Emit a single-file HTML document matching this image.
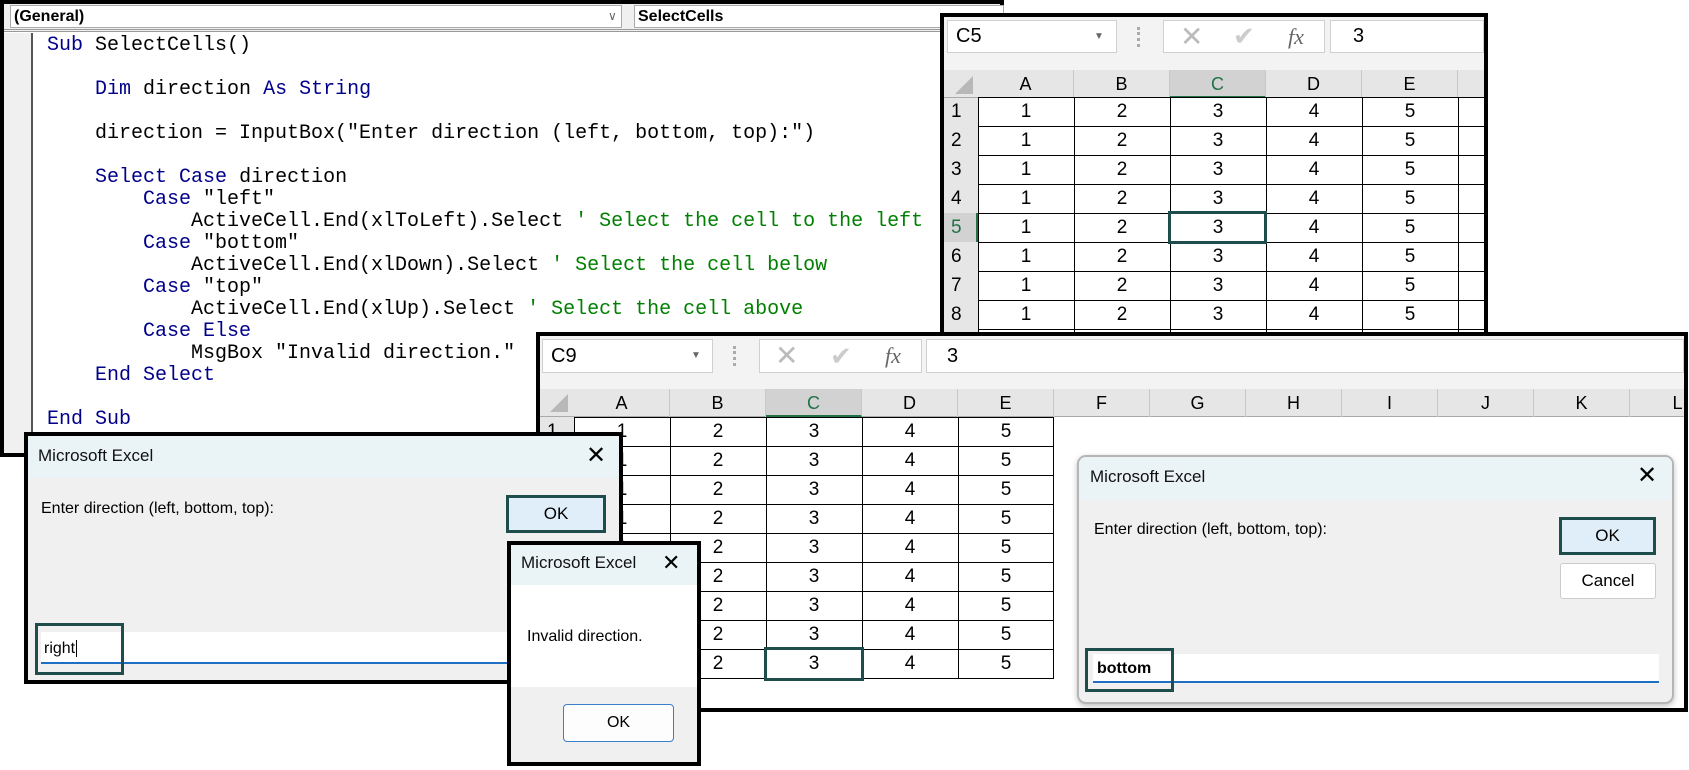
<!DOCTYPE html>
<html><head><meta charset="utf-8"><style>
*{margin:0;padding:0;box-sizing:border-box}
body{width:1689px;height:770px;background:#fff;position:relative;overflow:hidden;font-family:"Liberation Sans",sans-serif}
.a{position:absolute}
.code{font-family:"Liberation Mono",monospace;font-size:20px;line-height:22px;white-space:pre;color:#000}
.k{color:#00008b}.c{color:#008000}
.row{position:absolute;display:flex;font-size:19px;height:29px;line-height:29px}
.row span{width:96px;text-align:center;display:block}
.hd{position:absolute;display:flex;font-size:18px;line-height:28px;color:#000}
.hd span{width:96px;text-align:center;border-right:1px solid #c8c8c8;display:block;height:28px}
.fb{background:#fff;border:1px solid #d0d0d0}
.ttl{font-size:17px;color:#111}
</style></head><body>

<!-- VBA window -->
<div class="a" style="left:0;top:0;width:1004px;height:457px;border:4px solid #000;background:#fff"></div>
<div class="a" style="left:4px;top:4px;width:996px;height:28px;background:#f0f0f0;border-bottom:3px double #999"></div>
<div class="a" style="left:10px;top:5px;width:612px;height:23px;background:#fff;border:1px solid #aaa;font-weight:bold;font-size:16px;line-height:21px;padding-left:3px">(General)<span class="a" style="left:597px;top:0;font-weight:normal;color:#666;font-size:12px">&#x2228;</span></div>
<div class="a" style="left:634px;top:5px;width:370px;height:23px;background:#fff;border:1px solid #aaa;font-weight:bold;font-size:16px;line-height:21px;padding-left:3px">SelectCells</div>
<div class="a" style="left:4px;top:33px;width:29px;height:420px;background:#f0f0f0;border-right:2px solid #555"></div>
<div class="a code" style="left:47px;top:35px"><span class="k">Sub</span> SelectCells()

    <span class="k">Dim</span> direction <span class="k">As</span> <span class="k">String</span>

    direction = InputBox("Enter direction (left, bottom, top):")

    <span class="k">Select</span> <span class="k">Case</span> direction
        <span class="k">Case</span> "left"
            ActiveCell.End(xlToLeft).Select <span class="c">' Select the cell to the left</span>
        <span class="k">Case</span> "bottom"
            ActiveCell.End(xlDown).Select <span class="c">' Select the cell below</span>
        <span class="k">Case</span> "top"
            ActiveCell.End(xlUp).Select <span class="c">' Select the cell above</span>
        <span class="k">Case</span> <span class="k">Else</span>
            MsgBox "Invalid direction."
    <span class="k">End</span> <span class="k">Select</span>

<span class="k">End</span> <span class="k">Sub</span></div>

<!-- Excel window 1 -->
<div class="a" style="left:940px;top:13px;width:548px;height:330px;border:4px solid #000;background:#fff;overflow:hidden">
 <div class="a" style="left:0;top:0;width:544px;height:53px;background:#f3f3f3"></div>
 <div class="a" style="left:0;top:53px;width:544px;height:28px;background:#e6e6e6;border-bottom:1px solid #aaa"></div>
 <div class="a" style="left:0;top:81px;width:34px;height:250px;background:#e6e6e6"></div>
</div>
<div class="a fb" style="left:947px;top:20px;width:170px;height:33px;font-size:20px;line-height:31px;padding-left:8px">C5<span class="a" style="left:146px;top:0;font-size:10px;color:#666">&#9660;</span></div>
<div class="a" style="left:1137px;top:27px;width:3px;height:20px;border-left:3px dotted #aaa"></div>
<div class="a fb" style="left:1163px;top:20px;width:162px;height:33px"></div>
<div class="a" style="left:1180px;top:20px;font-size:28px;line-height:33px;color:#bbb">&#x2715;</div>
<div class="a" style="left:1233px;top:20px;font-size:26px;line-height:33px;color:#ccc">&#x2714;</div>
<div class="a" style="left:1288px;top:20px;font-size:22px;line-height:33px;color:#666;font-family:'Liberation Serif',serif;font-style:italic">fx</div>
<div class="a fb" style="left:1330px;top:20px;width:154px;height:33px;font-size:20px;line-height:31px;padding-left:22px">3</div>
<svg class="a" style="left:955px;top:76px" width="18" height="18"><polygon points="18,0 18,18 0,18" fill="#b8b8b8"/></svg>
<div class="hd" style="left:978px;top:70px"><span>A</span><span>B</span><span style="background:#d2d2d2;color:#217346;border-bottom:2px solid #217346">C</span><span>D</span><span>E</span></div>
<div class="a" style="left:978px;top:97px;width:506px;height:242px;background:repeating-linear-gradient(to right,#000 0 1px,transparent 1px 96px),repeating-linear-gradient(to bottom,#000 0 1px,transparent 1px 29px)"></div>
<div class="a" style="left:1458px;top:97px;width:1px;height:242px;background:#000"></div>
<div class="a" style="left:944px;top:213px;width:34px;height:29px;background:#d2d2d2;border-right:2px solid #217346"></div>
<div class="a" style="left:951px;top:97px;font-size:19px;line-height:29px">1<br>2<br>3<br>4<br><span style="color:#217346">5</span><br>6<br>7<br>8</div>
<div class="row" style="left:978px;top:97px"><span>1</span><span>2</span><span>3</span><span>4</span><span>5</span></div>
<div class="row" style="left:978px;top:126px"><span>1</span><span>2</span><span>3</span><span>4</span><span>5</span></div>
<div class="row" style="left:978px;top:155px"><span>1</span><span>2</span><span>3</span><span>4</span><span>5</span></div>
<div class="row" style="left:978px;top:184px"><span>1</span><span>2</span><span>3</span><span>4</span><span>5</span></div>
<div class="row" style="left:978px;top:213px"><span>1</span><span>2</span><span>3</span><span>4</span><span>5</span></div>
<div class="row" style="left:978px;top:242px"><span>1</span><span>2</span><span>3</span><span>4</span><span>5</span></div>
<div class="row" style="left:978px;top:271px"><span>1</span><span>2</span><span>3</span><span>4</span><span>5</span></div>
<div class="row" style="left:978px;top:300px"><span>1</span><span>2</span><span>3</span><span>4</span><span>5</span></div>
<div class="a" style="left:1168px;top:211px;width:99px;height:33px;border:3px solid #1e4d4b"></div>

<!-- Excel window 2 -->
<div class="a" style="left:536px;top:332px;width:1152px;height:380px;border:4px solid #000;background:#fff;overflow:hidden">
 <div class="a" style="left:0;top:0;width:1148px;height:53px;background:#f3f3f3"></div>
 <div class="a" style="left:0;top:53px;width:1148px;height:28px;background:#e6e6e6;border-bottom:1px solid #aaa"></div>
 <div class="a" style="left:0;top:81px;width:34px;height:300px;background:#e6e6e6"></div>
</div>
<div class="a fb" style="left:542px;top:339px;width:171px;height:34px;font-size:20px;line-height:32px;padding-left:8px">C9<span class="a" style="left:148px;top:0;font-size:10px;color:#666">&#9660;</span></div>
<div class="a" style="left:733px;top:346px;width:3px;height:20px;border-left:3px dotted #aaa"></div>
<div class="a fb" style="left:759px;top:339px;width:163px;height:34px"></div>
<div class="a" style="left:775px;top:339px;font-size:28px;line-height:34px;color:#bbb">&#x2715;</div>
<div class="a" style="left:830px;top:339px;font-size:26px;line-height:34px;color:#ccc">&#x2714;</div>
<div class="a" style="left:885px;top:339px;font-size:22px;line-height:34px;color:#666;font-family:'Liberation Serif',serif;font-style:italic">fx</div>
<div class="a fb" style="left:926px;top:339px;width:758px;height:34px;font-size:20px;line-height:32px;padding-left:20px">3</div>
<svg class="a" style="left:550px;top:394px" width="18" height="18"><polygon points="18,0 18,18 0,18" fill="#b8b8b8"/></svg>
<div class="hd" style="left:574px;top:389px"><span>A</span><span>B</span><span style="background:#d2d2d2;color:#217346;border-bottom:2px solid #217346">C</span><span>D</span><span>E</span><span>F</span><span>G</span><span>H</span><span>I</span><span>J</span><span>K</span><span>L</span></div>
<div class="a" style="left:574px;top:417px;width:480px;height:262px;background:repeating-linear-gradient(to right,#000 0 1px,transparent 1px 96px),repeating-linear-gradient(to bottom,#000 0 1px,transparent 1px 29px)"></div>
<div class="a" style="left:1053px;top:417px;width:1px;height:262px;background:#000"></div>
<div class="a" style="left:574px;top:678px;width:480px;height:1px;background:#000"></div>
<div class="a" style="left:547px;top:417px;font-size:19px;line-height:29px">1<br>2<br>3<br>4<br>5<br>6<br>7<br>8<br>9</div>
<div class="row" style="left:574px;top:417px"><span>1</span><span>2</span><span>3</span><span>4</span><span>5</span></div>
<div class="row" style="left:574px;top:446px"><span>1</span><span>2</span><span>3</span><span>4</span><span>5</span></div>
<div class="row" style="left:574px;top:475px"><span>1</span><span>2</span><span>3</span><span>4</span><span>5</span></div>
<div class="row" style="left:574px;top:504px"><span>1</span><span>2</span><span>3</span><span>4</span><span>5</span></div>
<div class="row" style="left:574px;top:533px"><span>1</span><span>2</span><span>3</span><span>4</span><span>5</span></div>
<div class="row" style="left:574px;top:562px"><span>1</span><span>2</span><span>3</span><span>4</span><span>5</span></div>
<div class="row" style="left:574px;top:591px"><span>1</span><span>2</span><span>3</span><span>4</span><span>5</span></div>
<div class="row" style="left:574px;top:620px"><span>1</span><span>2</span><span>3</span><span>4</span><span>5</span></div>
<div class="row" style="left:574px;top:649px"><span>1</span><span>2</span><span>3</span><span>4</span><span>5</span></div>
<div class="a" style="left:764px;top:647px;width:100px;height:34px;border:3px solid #1e4d4b"></div>

<!-- Dialog 3 (right) -->
<div class="a" style="left:1077px;top:455px;width:597px;height:249px;border:2px solid #b5b5b5;border-radius:9px;background:#f0f0f0;overflow:hidden;box-shadow:0 2px 6px rgba(0,0,0,.25)">
 <div class="a" style="left:0;top:0;width:597px;height:43px;background:#eaf4f7"></div>
</div>
<div class="a ttl" style="left:1090px;top:465px;line-height:24px">Microsoft Excel</div>
<div class="a" style="left:1637px;top:462px;font-size:24px;line-height:28px;font-weight:300">&#x2715;</div>
<div class="a" style="left:1094px;top:518px;font-size:16px;line-height:24px">Enter direction (left, bottom, top):</div>
<div class="a" style="left:1559px;top:517px;width:97px;height:38px;border:3px solid #1e4d4b;background:#e0eef9;font-size:17px;text-align:center;line-height:32px">OK</div>
<div class="a" style="left:1560px;top:563px;width:96px;height:36px;border:1px solid #ccc;border-radius:3px;background:#fff;font-size:17px;text-align:center;line-height:34px">Cancel</div>
<div class="a" style="left:1093px;top:654px;width:566px;height:29px;background:#fff;border-bottom:2px solid #1f6fc4"></div>
<div class="a" style="left:1085px;top:648px;width:89px;height:44px;border:3px solid #1e4d4b;font-size:16px;font-weight:bold;padding:9px 0 0 9px">bottom</div>

<!-- Dialog 1 (left) -->
<div class="a" style="left:24px;top:432px;width:599px;height:252px;border:4px solid #000;background:#f0f0f0">
 <div class="a" style="left:0;top:0;width:591px;height:42px;background:#eaf4f7"></div>
</div>
<div class="a ttl" style="left:38px;top:444px;line-height:24px">Microsoft Excel</div>
<div class="a" style="left:586px;top:442px;font-size:24px;line-height:28px">&#x2715;</div>
<div class="a" style="left:41px;top:497px;font-size:16px;line-height:24px">Enter direction (left, bottom, top):</div>
<div class="a" style="left:506px;top:495px;width:100px;height:38px;border:3px solid #1e4d4b;background:#e0eef9;font-size:17px;text-align:center;line-height:32px">OK</div>
<div class="a" style="left:41px;top:632px;width:575px;height:32px;background:#fff;border-bottom:2px solid #1f6fc4"></div>
<div class="a" style="left:35px;top:623px;width:89px;height:52px;border:3px solid #1e4d4b;font-size:16px;padding:14px 0 0 6px">right<span style="border-left:1px solid #000;margin-left:1px"></span></div>

<!-- Dialog 2 (invalid) -->
<div class="a" style="left:507px;top:541px;width:194px;height:225px;border:4px solid #000;background:#fff">
 <div class="a" style="left:0;top:0;width:186px;height:40px;background:#eaf4f7"></div>
 <div class="a" style="left:0;top:142px;width:186px;height:75px;background:#f0f0f0"></div>
</div>
<div class="a ttl" style="left:521px;top:551px;line-height:24px">Microsoft Excel</div>
<div class="a" style="left:662px;top:549px;font-size:22px;line-height:28px">&#x2715;</div>
<div class="a" style="left:527px;top:626px;font-size:16px;line-height:22px">Invalid direction.</div>
<div class="a" style="left:563px;top:704px;width:111px;height:38px;border:1px solid #3c7fc9;border-radius:4px;background:#fdfdfd;font-size:16px;text-align:center;line-height:36px">OK</div>

</body></html>
